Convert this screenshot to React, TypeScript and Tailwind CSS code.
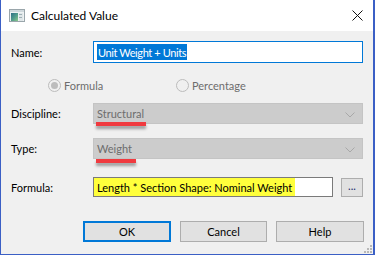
import React from 'react';

const font = { fontFamily: 'Lato, "Noto Sans", "Liberation Sans", sans-serif' };

function TitleIcon() {
    return (
        <svg width="16" height="14" viewBox="0 0 16 14">
            <defs>
                <linearGradient id="pane" x1="0" y1="0" x2="1" y2="1">
                    <stop offset="0" stopColor="#2f6f86" />
                    <stop offset="0.5" stopColor="#4f9a8c" />
                    <stop offset="1" stopColor="#8cc98a" />
                </linearGradient>
            </defs>
            <rect x="0.5" y="0.5" width="15" height="12" fill="#eef2f3" stroke="#9aa6ab" />
            <rect x="1" y="1" width="14" height="2" fill="#cfd8dc" />
            <rect x="2" y="4" width="7" height="8" fill="url(#pane)" />
            <rect x="10" y="4" width="4" height="8" fill="#dfe6e8" />
            <rect x="10" y="5" width="3" height="1" fill="#9fb0b5" />
            <rect x="10" y="8" width="3" height="1" fill="#9fb0b5" />
        </svg>
    );
}

function Chevron() {
    return (
        <svg width="10" height="6" viewBox="0 0 10 6" className="absolute right-[7px] top-[8px]">
            <path d="M0.5 0.5 L5 5 L9.5 0.5" fill="none" stroke="#a8a8a8" strokeWidth="1" />
        </svg>
    );
}

function Combo({ value, markTop }: { value: string; markTop: string }) {
    return (
        <div className="relative w-[270px] h-[21px] bg-[#cccccc] border border-[#c4c4c4] flex items-center pl-[3px] text-[#6d6d6d]">
            {value}
            <Chevron />
            <div className={`absolute left-[2px] ${markTop} h-[4px] bg-[#f03a3f] shadow-[0_3px_3px_rgba(0,0,0,0.35)]`} style={{ width: value === 'Structural' ? 50 : 40 }} />
        </div>
    );
}

function Radio({ checked, label }: { checked?: boolean; label: string }) {
    return (
        <div className="flex items-center gap-[3px] text-[#6d6d6d]">
            <span className="w-[13px] h-[13px] rounded-full border border-[#bcbcbc] bg-[#f0f0f0] flex items-center justify-center">
                {checked && <span className="w-[7px] h-[7px] rounded-full bg-[#bcbcbc]" />}
            </span>
            {label}
        </div>
    );
}

export default function App() {
    return (
        <div className="w-[375px] h-[255px] bg-[#f0f0f0] border-l border-r-2 border-b border-[#3b5fc5] text-[11px] text-black leading-none flex flex-col" style={font}>
            {/* Title bar */}
            <div className="h-[31px] bg-white flex items-center pl-[8px] pr-[10px]">
                <TitleIcon />
                <span className="ml-[6px] text-[12px]">Calculated Value</span>
                <svg width="11" height="11" viewBox="0 0 11 11" className="ml-auto">
                    <path d="M0.5 0.5 L10.5 10.5 M10.5 0.5 L0.5 10.5" stroke="#111" strokeWidth="1" />
                </svg>
            </div>

            <div className="flex-1 flex flex-col pl-[10px] pt-[10px] relative">
                {/* Name */}
                <div className="flex items-center h-[22px]">
                    <span className="w-[82px]">Name:</span>
                    <div className="w-[270px] h-[22px] bg-white border border-[#0078d7] flex items-center pl-[3px]">
                        <span className="bg-[#0078d7] text-white h-[16px] flex items-center px-[1px] tracking-[-0.4px]">Unit Weight + Units</span>
                    </div>
                </div>

                {/* Radios */}
                <div className="flex items-center h-[13px] mt-[16px] pl-[37px]">
                    <div className="w-[128px]"><Radio checked label="Formula" /></div>
                    <Radio label="Percentage" />
                </div>

                {/* Discipline */}
                <div className="flex items-center h-[21px] mt-[11px]">
                    <span className="w-[82px]">Discipline:</span>
                    <Combo value="Structural" markTop="top-[18px]" />
                </div>

                {/* Type */}
                <div className="flex items-center h-[21px] mt-[14px]">
                    <span className="w-[82px]">Type:</span>
                    <Combo value="Weight" markTop="top-[20px]" />
                </div>

                {/* Formula */}
                <div className="flex items-center h-[20px] mt-[18px]">
                    <span className="w-[82px]">Formula:</span>
                    <div className="w-[240px] h-[20px] bg-white border border-[#7a7a7a] flex items-stretch">
                        <span className="bg-[#ffff3c] flex items-center pl-[3px] pr-[3px]">Length * Section Shape: Nominal Weight</span>
                    </div>
                    <button className="ml-[8px] w-[22px] h-[19px] bg-[#e1e1e1] border border-[#adadad] flex items-center justify-center pb-[3px] text-[#1a2a6a]">...</button>
                </div>

                {/* Buttons */}
                <div className="flex items-center h-[21px] mt-[24px] pl-[72px] gap-[9px]">
                    <button className="w-[88px] h-[21px] bg-[#e1e1e1] border-2 border-[#0078d7] flex items-center justify-center">OK</button>
                    <button className="w-[87px] h-[21px] bg-[#e1e1e1] border border-[#adadad] flex items-center justify-center">Cancel</button>
                    <button className="w-[88px] h-[21px] bg-[#e1e1e1] border border-[#adadad] flex items-center justify-center">Help</button>
                </div>

                {/* Resize grip */}
                <svg width="8" height="8" viewBox="0 0 8 8" className="absolute right-[1px] bottom-[1px]">
                    <rect x="6" y="0" width="2" height="2" fill="#b8b8b8" />
                    <rect x="3" y="3" width="2" height="2" fill="#b8b8b8" />
                    <rect x="6" y="3" width="2" height="2" fill="#b8b8b8" />
                    <rect x="0" y="6" width="2" height="2" fill="#b8b8b8" />
                    <rect x="3" y="6" width="2" height="2" fill="#b8b8b8" />
                    <rect x="6" y="6" width="2" height="2" fill="#b8b8b8" />
                </svg>
            </div>
        </div>
    );
}
